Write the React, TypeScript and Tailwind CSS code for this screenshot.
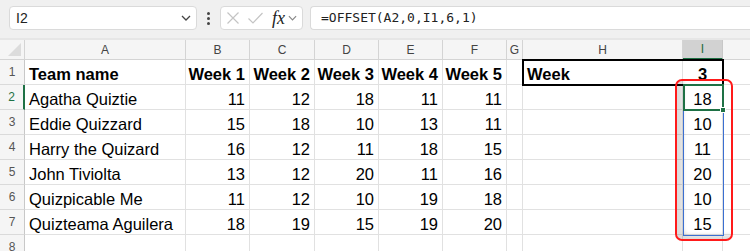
import React from 'react';

const COLS = ['A', 'B', 'C', 'D', 'E', 'F', 'G', 'H', 'I'];

const ROWS: (string | number)[][] = [
    ['Team name', 'Week 1', 'Week 2', 'Week 3', 'Week 4', 'Week 5', '', 'Week', 3],
    ['Agatha Quiztie', 11, 12, 18, 11, 11, '', '', 18],
    ['Eddie Quizzard', 15, 18, 10, 13, 11, '', '', 10],
    ['Harry the Quizard', 16, 12, 11, 18, 15, '', '', 11],
    ['John Tiviolta', 13, 12, 20, 11, 16, '', '', 20],
    ['Quizpicable Me', 11, 12, 10, 19, 18, '', '', 10],
    ['Quizteama Aguilera', 18, 19, 15, 19, 20, '', '', 15],
    ['', '', '', '', '', '', '', '', ''],
];

const gridTemplate = '25px 161px 64px 65px 64px 64px 64px 16px 160px 40px 1fr';

const Chevron = ({ className = '' }: { className?: string }) => (
    <svg width="10" height="6" viewBox="0 0 10 6" className={className}>
        <path d="M1 1l4 4 4-4" fill="none" stroke="currentColor" strokeWidth="1.3" />
    </svg>
);

const FormulaBar = () => (
    <div className="h-[40px] bg-[#f0f0f0] flex items-center pl-[9px] pb-[2px] border-b-2 border-[#e6e6e6]">
        {/* Name box */}
        <div className="w-[188px] h-[24px] bg-white rounded-[4px] border border-[#dadada] flex items-center justify-between pl-[6px] pr-[5px]">
            <span className="text-[14px] text-[#222]">I2</span>
            <Chevron className="text-[#444]" />
        </div>
        <div className="w-[23px] flex flex-col items-center gap-[2px]">
            <span className="w-[3px] h-[3px] rounded-full bg-[#444]" />
            <span className="w-[3px] h-[3px] rounded-full bg-[#444]" />
            <span className="w-[3px] h-[3px] rounded-full bg-[#444]" />
        </div>
        {/* cancel / enter / fx */}
        <div className="w-[83px] h-[24px] bg-white rounded-[4px] border border-[#dadada] flex items-center pl-[5px]">
            <svg width="14" height="14" viewBox="0 0 14 14">
                <path d="M1.5 1.5l11 11M12.5 1.5l-11 11" stroke="#c4c4c4" strokeWidth="1.2" />
            </svg>
            <svg width="17" height="14" viewBox="0 0 17 14" className="ml-[7px]">
                <path d="M1.5 7.5l4.5 4.5L15.5 2" fill="none" stroke="#c4c4c4" strokeWidth="1.2" />
            </svg>
            <span className="ml-[8px] text-[18px] italic text-[#222] leading-none" style={{ fontFamily: '"Liberation Serif", serif' }}>fx</span>
            <Chevron className="ml-[3px] text-[#888] w-[9px]" />
        </div>
        {/* formula input */}
        <div className="ml-[7px] flex-1 h-[24px] bg-white rounded-l-[4px] border border-r-0 border-[#dadada] flex items-center pl-[10px]">
            <span className="text-[13px] text-[#222]" style={{ fontFamily: '"DejaVu Sans Mono", monospace' }}>=OFFSET(A2,0,I1,6,1)</span>
        </div>
    </div>
);

const App: React.FC = () => {
    return (
        <div className="w-[750px] h-[251px] overflow-hidden bg-white relative" style={{ fontFamily: '"Liberation Sans", Arial, sans-serif' }}>
            <FormulaBar />

            <div className="grid" style={{ gridTemplateColumns: gridTemplate }}>
                {/* column headers */}
                <div className="h-[20px] bg-[#f5f5f5] border-r border-b border-[#d4d4d4] relative">
                    <div className="absolute right-[3px] bottom-[3px] w-0 h-0 border-l-[13px] border-l-transparent border-b-[13px] border-b-[#dcdcdc]" />
                </div>
                {COLS.map((c) => (
                    <div
                        key={c}
                        className={`h-[20px] flex items-center justify-center text-[12px] border-r ${c === 'I'
                            ? 'bg-[#d2d2d2] text-[#1f6b3f] border-b-2 border-b-[#1e7145] border-r-[#c8c8c8]'
                            : 'bg-[#f5f5f5] text-[#444] border-b border-[#d4d4d4]'}`}
                    >
                        {c}
                    </div>
                ))}
                <div className="h-[20px] bg-[#f5f5f5] border-b border-[#d4d4d4]" />

                {/* rows */}
                {ROWS.map((row, ri) => (
                    <React.Fragment key={ri}>
                        <div
                            className={`h-[25px] flex items-center justify-center text-[12px] bg-[#f5f5f5] border-b border-[#dadada] ${ri === 1
                                ? 'text-[#1e7145] border-r-2 border-r-[#1e7145]'
                                : 'text-[#555] border-r border-r-[#c8c8c8]'}`}
                        >
                            {ri + 1}
                        </div>
                        {row.map((v, ci) => {
                            const bold = ri === 0;
                            // column I is centred, the week columns are right-aligned
                            const align = ci === 8
                                ? 'justify-center'
                                : ci >= 1 && ci <= 5
                                    ? 'justify-end pr-[4px]'
                                    : 'justify-start pl-[4px]';
                            return (
                                <div
                                    key={ci}
                                    className={`h-[25px] flex items-end pb-[2px] leading-none border-r border-b border-[#e1e1e1] text-[16.5px] text-black whitespace-nowrap ${align} ${bold ? 'font-bold' : ''}`}
                                >
                                    {v}
                                </div>
                            );
                        })}
                        <div className="h-[25px] border-b border-[#e1e1e1]" />
                    </React.Fragment>
                ))}
            </div>

            {/* border around H1:I1 */}
            <div className="absolute left-[522px] top-[59px] w-[202px] h-[27px] border-2 border-black pointer-events-none" />

            {/* red annotation box with shadow */}
            <div className="absolute left-[675px] top-[79px] w-[58px] h-[162px] border-2 border-[#ff1a1a] rounded-[7px] shadow-[inset_8px_-6px_4px_-2px_rgba(0,0,0,0.14)] pointer-events-none" />

            {/* spill range */}
            <div className="absolute left-[683px] top-[85px] w-[41px] h-[151px] border border-[#3b6fd1] pointer-events-none" />

            {/* active cell */}
            <div className="absolute left-[683px] top-[84px] w-[41px] h-[27px] border-2 border-[#1e7145] pointer-events-none" />
            <div className="absolute left-[720px] top-[107px] w-[6px] h-[6px] bg-[#1e7145] border border-white pointer-events-none" />
        </div>
    );
};

export default App;
